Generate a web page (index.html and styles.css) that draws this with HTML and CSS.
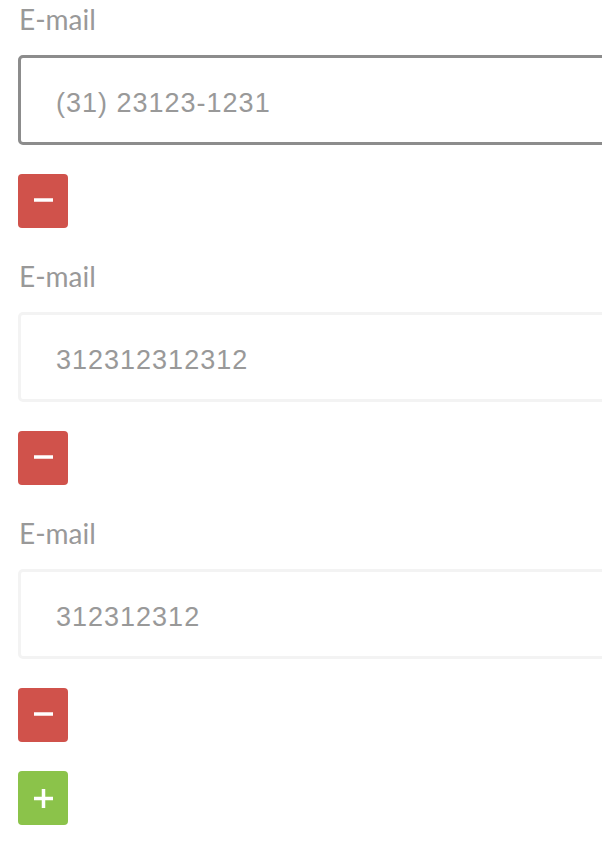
FILE: index.html
```html
<!DOCTYPE html>
<html lang="en">
<head>
  <meta charset="UTF-8" />
  <meta name="viewport" content="width=device-width, initial-scale=1" />
  <title>E-mails</title>
  <link rel="stylesheet" href="styles.css">
</head>
<body>
  <div class="list">
    <div class="field">
      <label class="label">E-mail</label>
      <input class="input focused" type="text" value="(31) 23123-1231">
      <button class="btn btn-remove" type="button">
        <svg width="19" height="19" viewBox="0 0 19 19"><path d="M0 8h19" stroke="#fff" stroke-width="3.5"/></svg>
      </button>
    </div>

    <div class="field">
      <label class="label">E-mail</label>
      <input class="input" type="text" value="312312312312">
      <button class="btn btn-remove" type="button">
        <svg width="19" height="19" viewBox="0 0 19 19"><path d="M0 8h19" stroke="#fff" stroke-width="3.5"/></svg>
      </button>
    </div>

    <div class="field">
      <label class="label">E-mail</label>
      <input class="input" type="text" value="312312312">
      <button class="btn btn-remove" type="button">
        <svg width="19" height="19" viewBox="0 0 19 19"><path d="M0 8h19" stroke="#fff" stroke-width="3.5"/></svg>
      </button>
    </div>

    <button class="btn btn-add" type="button">
      <svg width="19" height="19" viewBox="0 0 19 19"><path d="M0 9.5h19M9.5 0v19" stroke="#fff" stroke-width="3.5"/></svg>
    </button>
  </div>
</body>
</html>
```

FILE: styles.css
```css
body {
  margin: 0;
  background: #fff;
  overflow: hidden;
  font-family: Lato, "Liberation Sans", sans-serif;
}

.list {
  padding: 0 18px;
}

.field {
  display: flex;
  flex-direction: column;
  align-items: flex-start;
  margin-bottom: 29px;
}

.label {
  font-size: 28px;
  line-height: 38px;
  color: #999;
  padding-left: 1px;
}

.input {
  box-sizing: border-box;
  width: 700px;
  height: 90px;
  margin-top: 17px;
  padding: 6px 0 0 35px;
  border: 3px solid #f3f3f3;
  border-radius: 5px;
  font-family: "Liberation Sans", Arial, sans-serif;
  font-size: 27px;
  letter-spacing: 1px;
  color: #999;
  background: #fff;
  outline: none;
}

.input.focused {
  border-color: #8c8c8c;
}

.btn {
  display: flex;
  align-items: center;
  justify-content: center;
  width: 50px;
  height: 54px;
  padding: 0;
  border: none;
  border-radius: 4px;
  cursor: pointer;
}

.btn-remove {
  margin-top: 29px;
  background: #d0524b;
}

.btn-add {
  background: #8bc34a;
}
```
